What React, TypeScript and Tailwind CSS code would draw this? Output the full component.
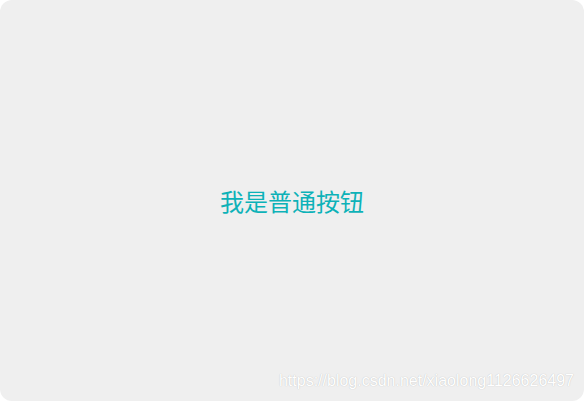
import React from 'react';

const App = () => {
  return (
    <div className="w-[584px] h-[401px] bg-white">
      <div className="relative w-full h-full bg-[#efefef] rounded-[12px] flex items-center justify-center">
        <button
          className="text-[24px] leading-none text-[#0db2b8]"
          style={{ fontFamily: '"Noto Sans CJK SC", sans-serif' }}
        >
          我是普通按钮
        </button>
        {/* watermark */}
        <span
          className="absolute right-[10px] bottom-[8px] text-[16px] text-white [text-shadow:0_0_1px_rgba(0,0,0,0.25)]"
          style={{ fontFamily: '"Liberation Sans", Arial, sans-serif' }}
        >
          https://blog.csdn.net/xiaolong1126626497
        </span>
      </div>
    </div>
  );
};

export default App;
